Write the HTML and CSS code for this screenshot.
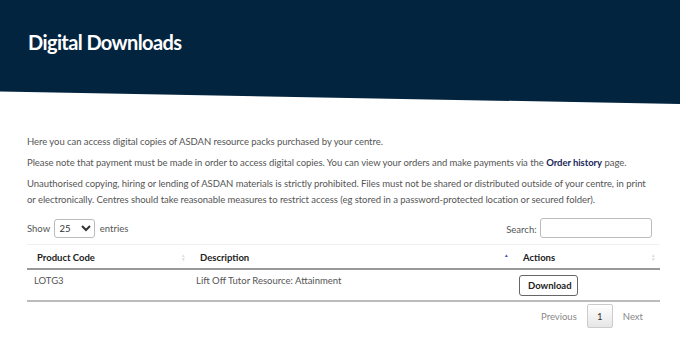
FILE: index.html
```html
<!DOCTYPE html>
<html lang="en">
<head>
  <meta charset="UTF-8">
  <meta name="viewport" content="width=device-width, initial-scale=1.0">
  <title>Digital Downloads</title>
  <link rel="stylesheet" href="styles.css">
</head>
<body>
  <header class="hero">
    <h1>Digital Downloads</h1>
  </header>

  <main class="content">
    <p>Here you can access digital copies of ASDAN resource packs purchased by your centre.</p>
    <p>Please note that payment must be made in order to access digital copies. You can view your orders and make payments via the <a href="#">Order history</a> page.</p>
    <p>Unauthorised copying, hiring or lending of ASDAN materials is strictly prohibited. Files must not be shared or distributed outside of your centre, in print or electronically. Centres should take reasonable measures to restrict access (eg stored in a password-protected location or secured folder).</p>

    <div class="table-tools">
      <label class="length">Show
        <select>
          <option>25</option>
        </select>
        entries</label>
      <label class="search">Search: <input type="search"></label>
    </div>

    <table class="downloads">
      <colgroup>
        <col class="c-code">
        <col class="c-desc">
        <col class="c-act">
      </colgroup>
      <thead>
        <tr>
          <th class="sort">Product Code</th>
          <th class="sort asc">Description</th>
          <th class="sort">Actions</th>
        </tr>
      </thead>
      <tbody>
        <tr>
          <td>LOTG3</td>
          <td>Lift Off Tutor Resource: Attainment</td>
          <td><button class="btn">Download</button></td>
        </tr>
      </tbody>
    </table>

    <div class="pager">
      <span class="pg disabled">Previous</span>
      <span class="pg current">1</span>
      <span class="pg disabled">Next</span>
    </div>
  </main>
</body>
</html>
```

FILE: styles.css
```css
body {
  margin: 0;
  font-family: 'Lato', 'Noto Sans', sans-serif;
  font-size: 9.5px;
  color: #555;
  background: #fff;
}

.hero {
  background: #03243f;
  height: 104px;
  padding: 29px 28px 0;
  box-sizing: border-box;
  clip-path: polygon(0 0, 100% 0, 100% 100%, 0 88%);
}

.hero h1 {
  margin: 0;
  color: #fff;
  font-size: 20px;
  line-height: 26px;
  letter-spacing: -0.6px;
  font-weight: 700;
}

.content {
  padding: 30px 28px 0 27px;
}

.content p {
  margin: 0 0 5px;
  line-height: 16px;
  letter-spacing: -0.05px;
}

.content a {
  color: #1b2658;
  font-weight: 700;
  text-decoration: none;
}

.table-tools {
  display: flex;
  justify-content: space-between;
  align-items: center;
  margin-top: 10px;
  height: 20px;
}

.length select {
  font: inherit;
  color: #333;
  height: 19px;
  width: 41px;
  margin: 0 2px;
  border: 1px solid #bbb;
  border-radius: 3px;
  background: #fff;
}

.search input {
  width: 112px;
  height: 20px;
  box-sizing: border-box;
  border: 1px solid #bbb;
  border-radius: 3px;
  margin-left: 1px;
}

.downloads {
  width: 633px;
  margin-top: 6px;
  border-collapse: collapse;
  table-layout: fixed;
  border-top: 1px solid #f0f0f0;
}

.c-code { width: 163px; }
.c-desc { width: 323px; }
.c-act { width: 147px; }

.downloads th {
  position: relative;
  text-align: left;
  color: #222;
  font-weight: 700;
  padding: 7px 10px 5px;
  line-height: 11px;
  border-bottom: 2px solid #999;
}

.downloads th.sort::after {
  content: "\25B4\A\25BE";
  white-space: pre;
  position: absolute;
  right: 5px;
  top: 8px;
  font-size: 5px;
  line-height: 4px;
  color: #ddd;
}

.downloads th.asc::after {
  content: "\25B4";
  color: #3c4fb8;
  top: 8px;
}

.downloads td {
  padding: 5px 6px 4px;
  line-height: 12px;
  vertical-align: top;
  border-bottom: 2px solid #bbb;
  height: 20px;
}

.downloads td:first-child {
  padding-left: 7px;
}

.btn {
  font: inherit;
  font-weight: 700;
  color: #222;
  background: #fff;
  border: 1px solid #666;
  border-radius: 3px;
  padding: 3px 8px;
  height: 21px;
  width: 59px;
}

.pager {
  display: flex;
  justify-content: flex-end;
  align-items: center;
  gap: 10px;
  margin-top: 2px;
  padding-right: 9px;
}

.pg {
  color: #888;
}

.pg.current {
  color: #333;
  border: 1px solid #ccc;
  border-radius: 2px;
  background: linear-gradient(#fff, #e6e6e6);
  width: 24px;
  height: 22px;
  display: flex;
  align-items: center;
  justify-content: center;
}
```
